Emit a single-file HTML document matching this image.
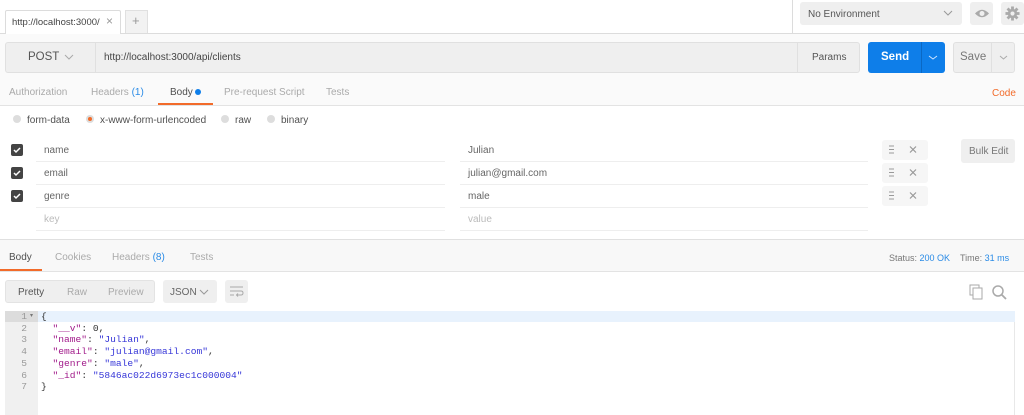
<!DOCTYPE html>
<html><head><style>
*{box-sizing:border-box;margin:0;padding:0}
body{width:1024px;height:415px;overflow:hidden;background:#fff;font-family:"Liberation Sans",sans-serif;font-size:10px;color:#505050;position:relative}
.a{position:absolute}
.g{background:#efefef;border-radius:3px}
.mono{font-family:"Liberation Mono",monospace;font-size:9.6px}
.h{color:#999;font-size:11px}
</style></head><body>
<div class="a" style="left:0;top:33px;width:1024px;height:1px;background:#dcdcdc"></div>
<div class="a" style="left:5px;top:10px;width:116px;height:24px;border:1px solid #dcdcdc;border-bottom:none;background:#fff;border-radius:2px 2px 0 0"></div>
<div class="a" style="left:12px;top:17px;font-size:9.5px;color:#444">http://localhost:3000/</div>
<div class="a" style="left:106px;top:14px;font-size:12px;color:#999">×</div>
<div class="a" style="left:125px;top:10px;width:23px;height:23px;background:#f2f2f2;border:1px solid #e0e0e0;border-bottom:none"></div>
<div class="a" style="left:132px;top:13px;font-size:13px;color:#999">+</div>
<div class="a" style="left:792px;top:0;width:1px;height:33px;background:#dcdcdc"></div>
<div class="a g" style="left:800px;top:2px;width:162px;height:23px"></div>
<div class="a" style="left:808px;top:9px;font-size:10px;color:#555">No Environment</div>
<svg class="a" style="left:943px;top:10px" width="10" height="7"><path d="M1 1L5 5L9 1" stroke="#999" fill="none"/></svg>
<div class="a g" style="left:970px;top:2px;width:23px;height:23px"></div>
<svg class="a" style="left:974px;top:8px" width="16" height="11"><path d="M1 5.5Q8 -2 15 5.5Q8 13 1 5.5Z" fill="#aaa"/><circle cx="8" cy="5.5" r="2.5" fill="#efefef"/></svg>
<div class="a g" style="left:1001px;top:2px;width:23px;height:23px"></div>
<svg class="a" style="left:1005px;top:6px" width="15" height="15" viewBox="0 0 16 16"><g fill="#aaa"><circle cx="8" cy="8" r="5"/><rect x="6.5" y="0.5" width="3" height="15"/><rect x="0.5" y="6.5" width="15" height="3"/><rect x="6.5" y="0.5" width="3" height="15" transform="rotate(45 8 8)"/><rect x="6.5" y="0.5" width="3" height="15" transform="rotate(-45 8 8)"/></g><circle cx="8" cy="8" r="2.2" fill="#efefef"/></svg>
<div class="a" style="left:0;top:34px;width:1024px;height:71px;background:#fafafa"></div>
<div class="a" style="left:5px;top:42px;width:855px;height:31px;background:#efefef;border:1px solid #e0e0e0;border-radius:3px"></div>
<div class="a" style="left:95px;top:42px;width:1px;height:31px;background:#e0e0e0"></div>
<div class="a" style="left:797px;top:42px;width:1px;height:31px;background:#e0e0e0"></div>
<div class="a" style="left:28px;top:51px;font-size:11.5px;color:#555">POST</div>
<svg class="a" style="left:64px;top:54px" width="10" height="7"><path d="M1 1L5 5L9 1" stroke="#aaa" fill="none"/></svg>
<div class="a" style="left:104px;top:52px;font-size:10px;color:#444">http://localhost:3000/api/clients</div>
<div class="a" style="left:812px;top:52px;font-size:10px;color:#555">Params</div>
<div class="a" style="left:868px;top:42px;width:77px;height:31px;background:#0e7ee9;border-radius:3px"></div>
<div class="a" style="left:921px;top:42px;width:1px;height:31px;background:#0a68c4"></div>
<div class="a" style="left:881px;top:51px;font-size:11.5px;font-weight:bold;color:#fff">Send</div>
<svg class="a" style="left:928px;top:55px" width="10" height="6"><path d="M1 1L5 4L9 1" stroke="#cfe4ff" fill="none"/></svg>
<div class="a" style="left:953px;top:42px;width:62px;height:31px;background:#efefef;border:1px solid #e0e0e0;border-radius:3px"></div>
<div class="a" style="left:991px;top:42px;width:1px;height:31px;background:#e0e0e0"></div>
<div class="a" style="left:960px;top:51px;font-size:11.5px;color:#777">Save</div>
<svg class="a" style="left:999px;top:55px" width="9" height="6"><path d="M1 1L4.5 4L8 1" stroke="#aaa" fill="none"/></svg>
<div class="a" style="left:9px;top:87px;color:#aaa">Authorization</div>
<div class="a" style="left:91px;top:87px;color:#aaa">Headers <span style="color:#2a8be6">(1)</span></div>
<div class="a" style="left:170px;top:87px;color:#505050">Body</div>
<div class="a" style="left:195px;top:89px;width:6px;height:6px;border-radius:50%;background:#0e7ee9"></div>
<div class="a" style="left:158px;top:103px;width:55px;height:2px;background:#f26b2a"></div>
<div class="a" style="left:224px;top:87px;color:#aaa">Pre-request Script</div>
<div class="a" style="left:326px;top:87px;color:#aaa">Tests</div>
<div class="a" style="left:992px;top:88px;color:#f26b2a">Code</div>
<div class="a" style="left:0;top:105px;width:1024px;height:1px;background:#e3e3e3"></div>
<div class="a" style="left:13px;top:115px;width:8px;height:8px;border-radius:50%;background:#ddd"></div>
<div class="a" style="left:27px;top:115px">form-data</div>
<div class="a" style="left:86px;top:115px;width:8px;height:8px;border-radius:50%;background:#ddd"></div>
<div class="a" style="left:88px;top:117px;width:4px;height:4px;border-radius:50%;background:#f26b2a"></div>
<div class="a" style="left:100px;top:115px">x-www-form-urlencoded</div>
<div class="a" style="left:221px;top:115px;width:8px;height:8px;border-radius:50%;background:#ddd"></div>
<div class="a" style="left:235px;top:115px">raw</div>
<div class="a" style="left:267px;top:115px;width:8px;height:8px;border-radius:50%;background:#ddd"></div>
<div class="a" style="left:281px;top:115px">binary</div>
<div class="a" style="left:36px;top:161px;width:409px;height:1px;background:#eee"></div>
<div class="a" style="left:36px;top:184px;width:409px;height:1px;background:#eee"></div>
<div class="a" style="left:36px;top:207px;width:409px;height:1px;background:#eee"></div>
<div class="a" style="left:36px;top:230px;width:409px;height:1px;background:#eee"></div>
<div class="a" style="left:460px;top:161px;width:408px;height:1px;background:#eee"></div>
<div class="a" style="left:460px;top:184px;width:408px;height:1px;background:#eee"></div>
<div class="a" style="left:460px;top:207px;width:408px;height:1px;background:#eee"></div>
<div class="a" style="left:460px;top:230px;width:408px;height:1px;background:#eee"></div>
<svg class="a" style="left:11px;top:144px" width="13" height="82">
<g><rect width="12" height="12" rx="2" fill="#444"/><path d="M3 6L5 8L9 4" stroke="#fff" stroke-width="1.5" fill="none"/></g>
<g transform="translate(0,23)"><rect width="12" height="12" rx="2" fill="#444"/><path d="M3 6L5 8L9 4" stroke="#fff" stroke-width="1.5" fill="none"/></g>
<g transform="translate(0,46)"><rect width="12" height="12" rx="2" fill="#444"/><path d="M3 6L5 8L9 4" stroke="#fff" stroke-width="1.5" fill="none"/></g>
</svg>
<div class="a" style="left:44px;top:145px;color:#666">name</div>
<div class="a" style="left:44px;top:168px;color:#666">email</div>
<div class="a" style="left:44px;top:191px;color:#666">genre</div>
<div class="a" style="left:44px;top:214px;color:#bbb">key</div>
<div class="a" style="left:468px;top:145px;color:#666">Julian</div>
<div class="a" style="left:468px;top:168px;color:#666">julian@gmail.com</div>
<div class="a" style="left:468px;top:191px;color:#666">male</div>
<div class="a" style="left:468px;top:214px;color:#bbb">value</div>
<svg class="a" style="left:882px;top:140px" width="46" height="66">
<g id="r"><rect width="46" height="20" rx="3" fill="#f6f6f6"/><path d="M7 6H12M7 9.5H12M7 13H12" stroke="#999"/><path d="M28 6.5L34 12.5M34 6.5L28 12.5" stroke="#999" stroke-width="1.2"/></g>
<g transform="translate(0,23)"><rect width="46" height="20" rx="3" fill="#f6f6f6"/><path d="M7 6H12M7 9.5H12M7 13H12" stroke="#999"/><path d="M28 6.5L34 12.5M34 6.5L28 12.5" stroke="#999" stroke-width="1.2"/></g>
<g transform="translate(0,46)"><rect width="46" height="20" rx="3" fill="#f6f6f6"/><path d="M7 6H12M7 9.5H12M7 13H12" stroke="#999"/><path d="M28 6.5L34 12.5M34 6.5L28 12.5" stroke="#999" stroke-width="1.2"/></g>
</svg>
<div class="a g" style="left:961px;top:139px;width:54px;height:24px"></div>
<div class="a" style="left:969px;top:146px;color:#777">Bulk Edit</div>
<div class="a" style="left:0;top:239px;width:1024px;height:1px;background:#e0e0e0"></div>
<div class="a" style="left:0;top:240px;width:1024px;height:31px;background:#f8f8f8"></div>
<div class="a" style="left:0;top:271px;width:1024px;height:1px;background:#e3e3e3"></div>
<div class="a" style="left:9px;top:252px;color:#505050">Body</div>
<div class="a" style="left:0;top:269px;width:42px;height:2px;background:#f26b2a"></div>
<div class="a" style="left:55px;top:252px;color:#aaa">Cookies</div>
<div class="a" style="left:112px;top:252px;color:#aaa">Headers <span style="color:#2a8be6">(8)</span></div>
<div class="a" style="left:190px;top:252px;color:#aaa">Tests</div>
<div class="a" style="left:889px;top:253px;font-size:9px;color:#777">Status: <span style="color:#2a8be6">200 OK</span></div>
<div class="a" style="left:960px;top:253px;font-size:9px;color:#777">Time: <span style="color:#2a8be6">31 ms</span></div>
<div class="a g" style="left:5px;top:280px;width:150px;height:23px;border:1px solid #e3e3e3"></div>
<div class="a" style="left:18px;top:287px;color:#555">Pretty</div>
<div class="a" style="left:67px;top:287px;color:#aaa">Raw</div>
<div class="a" style="left:108px;top:287px;color:#aaa">Preview</div>
<div class="a g" style="left:163px;top:280px;width:54px;height:23px"></div>
<div class="a" style="left:170px;top:287px;color:#666">JSON</div>
<svg class="a" style="left:199px;top:289px" width="10" height="7"><path d="M1 1L5 5L9 1" stroke="#999" fill="none"/></svg>
<div class="a g" style="left:225px;top:280px;width:23px;height:23px"></div>
<svg class="a" style="left:229px;top:286px" width="15" height="11"><path d="M1 1H14M1 5H12Q14 5 14 7Q14 9 12 9H8M1 9H5" stroke="#aaa" fill="none"/><path d="M9 7.5L7.5 9L9 10.5" stroke="#aaa" fill="none"/></svg>
<svg class="a" style="left:969px;top:284px" width="40" height="16"><rect x="1" y="1" width="9" height="10" fill="none" stroke="#aaa"/><rect x="4" y="4" width="9" height="11" fill="#fff" stroke="#aaa"/><circle cx="29" cy="7" r="5" fill="none" stroke="#aaa" stroke-width="1.5"/><path d="M32.5 10.5L37 15" stroke="#aaa" stroke-width="1.8"/></svg>
<div class="a" style="left:5px;top:311px;width:1010px;height:104px;border:1px solid #e8e8e8;border-bottom:none"></div>
<div class="a" style="left:5px;top:311px;width:33px;height:104px;background:#f0f0f0"></div>
<div class="a" style="left:38px;top:311px;width:977px;height:11px;background:#e8f2fd"></div>
<div class="a" style="left:5px;top:311px;width:33px;height:11px;background:#dcdcdc"></div>
<div class="a mono" style="left:5px;top:311px;width:22px;text-align:right;line-height:11.7px;color:#999">1<br>2<br>3<br>4<br>5<br>6<br>7</div>
<div class="a" style="left:30px;top:312px;font-size:6px;color:#777">▾</div>
<div class="a mono" style="left:41px;top:311px;line-height:11.7px;color:#333;white-space:pre">{
  <span style="color:#a11a8a">"__v"</span>: <span style="color:#333">0</span>,
  <span style="color:#a11a8a">"name"</span>: <span style="color:#3636d8">"Julian"</span>,
  <span style="color:#a11a8a">"email"</span>: <span style="color:#3636d8">"julian@gmail.com"</span>,
  <span style="color:#a11a8a">"genre"</span>: <span style="color:#3636d8">"male"</span>,
  <span style="color:#a11a8a">"_id"</span>: <span style="color:#3636d8">"5846ac022d6973ec1c000004"</span>
}</div>
</body></html>
